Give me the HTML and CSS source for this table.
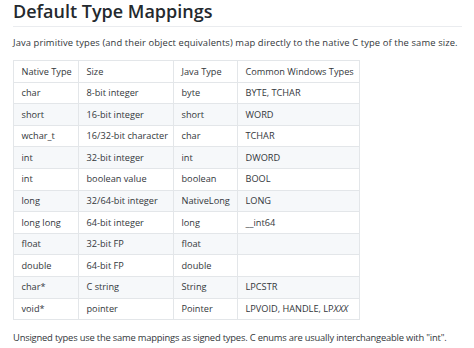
FILE: index.html
```html
<!DOCTYPE html>
<html>
<head>
<meta charset="utf-8">
<link rel="stylesheet" href="styles.css">
</head>
<body>
<div class="doc">
  <h1 class="title">Default Type Mappings</h1>
  <p class="text intro">Java primitive types (and their object equivalents) map directly to the native C type of the same size.</p>
  <table class="map">
    <colgroup>
      <col class="c1"><col class="c2"><col class="c3"><col class="c4">
    </colgroup>
    <thead>
      <tr><th>Native Type</th><th>Size</th><th>Java Type</th><th>Common Windows Types</th></tr>
    </thead>
    <tbody>
      <tr><td>char</td><td>8-bit integer</td><td>byte</td><td>BYTE, TCHAR</td></tr>
      <tr><td>short</td><td>16-bit integer</td><td>short</td><td>WORD</td></tr>
      <tr><td>wchar_t</td><td>16/32-bit character</td><td>char</td><td>TCHAR</td></tr>
      <tr><td>int</td><td>32-bit integer</td><td>int</td><td>DWORD</td></tr>
      <tr><td>int</td><td>boolean value</td><td>boolean</td><td>BOOL</td></tr>
      <tr><td>long</td><td>32/64-bit integer</td><td>NativeLong</td><td>LONG</td></tr>
      <tr><td>long long</td><td>64-bit integer</td><td>long</td><td>__int64</td></tr>
      <tr><td>float</td><td>32-bit FP</td><td>float</td><td></td></tr>
      <tr><td>double</td><td>64-bit FP</td><td>double</td><td></td></tr>
      <tr><td>char*</td><td>C string</td><td>String</td><td>LPCSTR</td></tr>
      <tr><td>void*</td><td>pointer</td><td>Pointer</td><td>LPVOID, HANDLE, LP<em class="it">XXX</em></td></tr>
    </tbody>
  </table>
  <p class="text outro">Unsigned types use the same mappings as signed types. C enums are usually interchangeable with "int".</p>
</div>
</body>
</html>
```

FILE: styles.css
```css
html, body {
  margin: 0;
  padding: 0;
  background: #ffffff;
}
.doc {
  padding: 0 12px 0 13px;
  font-family: "Open Sans", "Noto Sans", sans-serif;
  color: #33373b;
}
.title {
  margin: 0;
  font-size: 18px;
  font-weight: 600;
  line-height: 22px;
  padding-bottom: 4px;
  border-bottom: 1px solid #eaecef;
  color: #24292e;
}
.text {
  font-size: 9.4px;
  line-height: 14px;
  white-space: nowrap;
}
.intro {
  margin: 9px 0 10px;
  letter-spacing: 0.11px;
}
.outro {
  margin: 11px 0 0;
  letter-spacing: -0.2px;
}
.map {
  border-collapse: collapse;
  table-layout: fixed;
  width: 346px;
  font-size: 9.2px;
  line-height: 13.6px;
}
.c1 { width: 65px; }
.c2 { width: 95px; }
.c3 { width: 64px; }
.c4 { width: 122px; }
.map th, .map td {
  border: 1px solid #e3e6e9;
  padding: 3.5px 7.5px;
  text-align: left;
  font-weight: 400;
  white-space: nowrap;
}
.map tbody tr:nth-child(2n) {
  background: #f6f8fa;
}
.it {
  font-style: italic;
}
```
